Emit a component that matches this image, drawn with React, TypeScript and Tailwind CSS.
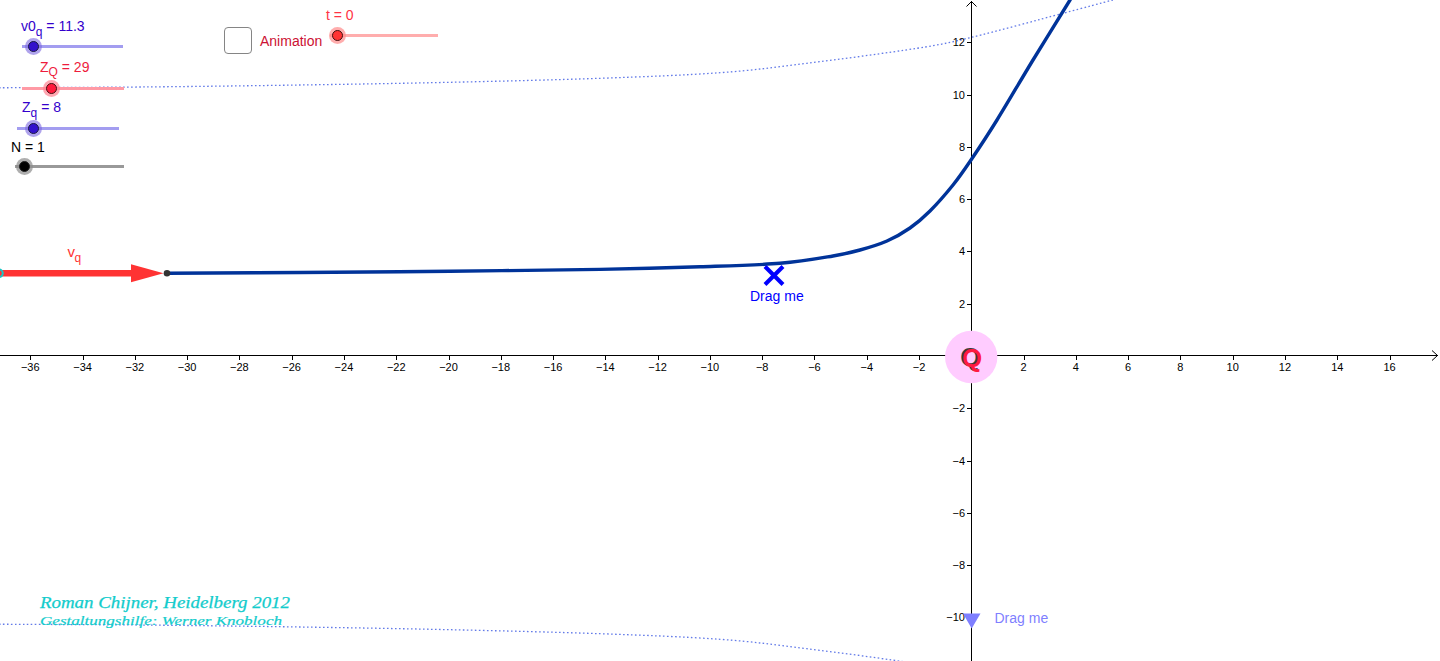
import React from "react";

const S = 26.14;
const X0 = 971.3;
const Y0 = 356;
const sx = (v: number) => X0 + v * S;
const sy = (v: number) => Y0 - v * S;

type P = [number, number];

function crPath(pts: P[]): string {
  const f = (n: number) => n.toFixed(2);
  let d = `M${f(pts[0][0])},${f(pts[0][1])}`;
  for (let i = 0; i < pts.length - 1; i++) {
    const p0 = pts[i - 1] || pts[i];
    const p1 = pts[i];
    const p2 = pts[i + 1];
    const p3 = pts[i + 2] || p2;
    const c1x = p1[0] + (p2[0] - p0[0]) / 6;
    const c1y = p1[1] + (p2[1] - p0[1]) / 6;
    const c2x = p2[0] - (p3[0] - p1[0]) / 6;
    const c2y = p2[1] - (p3[1] - p1[1]) / 6;
    d += ` C${f(c1x)},${f(c1y)} ${f(c2x)},${f(c2y)} ${f(p2[0])},${f(p2[1])}`;
  }
  return d;
}

const mainCurve: P[] = [
  [167, 273.3],
  [300, 272.5],
  [450, 271.2],
  [600, 269.4],
  [700, 266.8],
  [780, 263.3],
  [833, 256],
  [860, 250],
  [887, 241],
  [910, 228],
  [930, 211],
  [953, 185],
  [971, 160],
  [997, 120],
  [1033, 60],
  [1070, 0],
  [1077, -12],
];

const topDotted: P[] = [
  [-5, 87.8],
  [150, 86.9],
  [300, 85],
  [450, 82.3],
  [600, 78.3],
  [720, 72.7],
  [807, 63.3],
  [917, 48.3],
  [971.7, 37.3],
  [1063, 13.3],
  [1113, 0],
  [1135, -5],
];
const bottomDotted: P[] = topDotted.map(([x, y]) => [x, 712 - y] as P);

const xTicks: number[] = [];
for (let k = -36; k <= 16; k += 2) if (k !== 0) xTicks.push(k);
const yTicks: number[] = [];
for (let k = -10; k <= 12; k += 2) if (k !== 0) yTicks.push(k);

const lab = (k: number) => (k < 0 ? "\u2212" + Math.abs(k) : String(k));

function Graph() {
  return (
    <svg
      className="absolute inset-0"
      width={1440}
      height={661}
      viewBox="0 0 1440 661"
      fontFamily="'Liberation Sans', Arial, sans-serif"
    >
      {/* dotted curves */}
      <path
        d={crPath(topDotted)}
        fill="none"
        stroke="#2f4fe0"
        strokeOpacity={0.75}
        strokeWidth={1.3}
        strokeDasharray="1.6 2.4"
      />
      <path
        d={crPath(bottomDotted)}
        fill="none"
        stroke="#2f4fe0"
        strokeOpacity={0.75}
        strokeWidth={1.3}
        strokeDasharray="1.6 2.4"
      />

      {/* axes */}
      <line x1={0} y1={355.5} x2={1438} y2={355.5} stroke="#000" strokeWidth={1} />
      <polyline points="1432,350.5 1437.5,355.5 1432,360.5" fill="none" stroke="#000" strokeWidth={1} />
      <line x1={971.5} y1={661} x2={971.5} y2={1} stroke="#000" strokeWidth={1} />
      <polyline points="966.5,6.5 971.5,1.5 976.5,6.5" fill="none" stroke="#000" strokeWidth={1} />

      {xTicks.map((k) => (
        <g key={"x" + k}>
          <line x1={Math.round(sx(k)) + 0.5} y1={356} x2={Math.round(sx(k)) + 0.5} y2={360} stroke="#000" />
          <text x={sx(k)} y={370.7} fontSize={11} textAnchor="middle" fill="#000">
            {lab(k)}
          </text>
        </g>
      ))}
      {yTicks.map((k) => (
        <g key={"y" + k}>
          <line x1={967} y1={Math.round(sy(k)) + 0.5} x2={971} y2={Math.round(sy(k)) + 0.5} stroke="#000" />
          <text x={965} y={sy(k) + 4} fontSize={11} textAnchor="end" fill="#000">
            {lab(k)}
          </text>
        </g>
      ))}

      {/* main trajectory */}
      <path d={crPath(mainCurve)} fill="none" stroke="#003399" strokeWidth={3.4} strokeLinecap="round" />

      {/* velocity vector */}
      <line x1={0} y1={273.3} x2={134} y2={273.3} stroke="#ff3333" strokeWidth={6.5} />
      <circle cx={-1} cy={273.3} r={3.8} fill="#ff3333" stroke="#19c6c6" strokeWidth={2} />
      <polygon points="131,264.3 163.5,273.3 131,282.3" fill="#ff3333" />
      <circle cx={167} cy={273.3} r={3.3} fill="#333" />
      <text x={67.5} y={256.7} fontSize={15} fill="#ff3333">
        v
      </text>
      <text x={74.5} y={261.5} fontSize={12} fill="#ff3333">
        q
      </text>

      {/* drag cross */}
      <line x1={765} y1={266.5} x2={783} y2={284.5} stroke="#0000ff" strokeWidth={4} />
      <line x1={783} y1={266.5} x2={765} y2={284.5} stroke="#0000ff" strokeWidth={4} />
      <text x={750} y={300.7} fontSize={14} fill="#0000ff">
        Drag me
      </text>

      {/* Q charge */}
      <circle cx={971.2} cy={357} r={26.2} fill="#ffccff" />
      <text x={960.3} y={366} fontSize={26} fontWeight={700} fill="#3a3a3a">
        Q
      </text>
      <text x={962} y={366.8} fontSize={26} fontWeight={700} fill="#ff1a40">
        Q
      </text>

      {/* bottom drag triangle */}
      <polygon points="963,613.5 980.5,613.5 971.7,628.5" fill="#7f7fff" />
      <text x={994.5} y={623.3} fontSize={14} fill="#7f7fff">
        Drag me
      </text>

      {/* credits */}
      <text
        x={40}
        y={608.3}
        fontSize={16}
        fontStyle="italic"
        fontFamily="'Liberation Serif', 'Times New Roman', serif"
        fill="#12cccc"
        stroke="#12cccc"
        strokeWidth={0.25}
        textLength={250}
        lengthAdjust="spacingAndGlyphs"
      >
        Roman Chijner, Heidelberg 2012
      </text>
      <text
        x={40}
        y={625}
        fontSize={12.5}
        fontStyle="italic"
        fontFamily="'Liberation Serif', 'Times New Roman', serif"
        fill="#12cccc"
        stroke="#12cccc"
        strokeWidth={0.2}
        textLength={242}
        lengthAdjust="spacingAndGlyphs"
      >
        Gestaltungshilfe: Werner Knobloch
      </text>
    </svg>
  );
}

type SliderProps = {
  pos: string;
  labelCls: string;
  trackCls: string;
  haloCls: string;
  knobCls: string;
  label: React.ReactNode;
};

function Slider({ pos, labelCls, trackCls, haloCls, knobCls, label }: SliderProps) {
  return (
    <div className={`absolute flex flex-col items-start ${pos}`}>
      <div className={`whitespace-nowrap text-[14px] leading-[14px] ${labelCls}`}>{label}</div>
      <div className={`relative h-[3px] ${trackCls}`}>
        <div className={`absolute top-[-7px] h-[17px] w-[17px] rounded-full ${haloCls}`} />
        <div className={`absolute top-[-4px] h-[11px] w-[11px] rounded-full border ${knobCls}`} />
      </div>
    </div>
  );
}

function Controls() {
  return (
    <>
      <Slider
        pos="left-[21px] top-[19px]"
        labelCls="text-[#3300cc]"
        trackCls="ml-[1px] mt-[11px] w-[101px] bg-[#a39df0]"
        haloCls="left-[3px] bg-[#7a66e0]/60"
        knobCls="left-[6px] border-[#1a1a40] bg-[#3311cc]"
        label={
          <>
            v0<span className="relative top-[5px] text-[12px]">q</span> = 11.3
          </>
        }
      />
      <Slider
        pos="left-[22px] top-[60px]"
        labelCls="ml-[18px] text-[#ee1c3c]"
        trackCls="mt-[12px] w-[102px] bg-[#ff9aa5]"
        haloCls="left-[21px] bg-[#ff8090]/70"
        knobCls="left-[24px] border-[#401010] bg-[#ff1a3c]"
        label={
          <>
            Z<span className="relative top-[4px] text-[12px]">Q</span> = 29
          </>
        }
      />
      <Slider
        pos="left-[17px] top-[100px]"
        labelCls="ml-[5px] text-[#3300cc]"
        trackCls="mt-[12px] w-[102px] bg-[#a39df0]"
        haloCls="left-[8px] bg-[#7a66e0]/60"
        knobCls="left-[11px] border-[#1a1a40] bg-[#3311cc]"
        label={
          <>
            Z<span className="relative top-[5px] text-[12px]">q</span> = 8
          </>
        }
      />
      <Slider
        pos="left-[11px] top-[140px]"
        labelCls="text-black"
        trackCls="ml-[4px] mt-[11px] w-[109px] bg-[#999999]"
        haloCls="left-[0.5px] bg-[#8c8c8c]/70"
        knobCls="left-[3.5px] border-[#222] bg-black"
        label="N = 1"
      />

      <div className="absolute left-[224px] top-[27px] flex items-center gap-[8px]">
        <div className="h-[27px] w-[28px] rounded-[4px] border border-[#858585] bg-white" />
        <span className="whitespace-nowrap text-[14px] leading-[14px] text-[#cc1133]">Animation</span>
      </div>

      <Slider
        pos="left-[326px] top-[8px]"
        labelCls="text-[#ff3344]"
        trackCls="ml-[4px] mt-[12px] w-[108px] bg-[#ffadad]"
        haloCls="left-[-1px] bg-[#ff8a8a]/70"
        knobCls="left-[2px] border-[#401010] bg-[#ff3333]"
        label="t = 0"
      />
    </>
  );
}

export default function App() {
  return (
    <div className="relative h-[661px] w-[1440px] overflow-hidden bg-white font-['Liberation_Sans',Arial,sans-serif]">
      <Graph />
      <Controls />
    </div>
  );
}
